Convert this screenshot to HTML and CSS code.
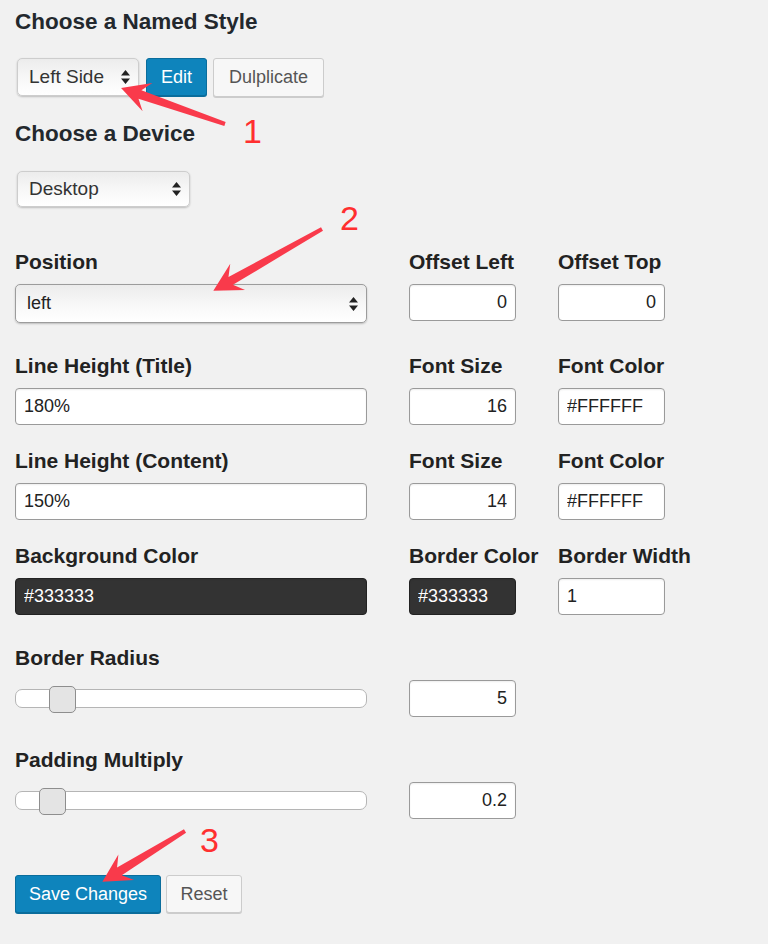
FILE: index.html
```html
<!DOCTYPE html>
<html lang="en">
<head>
    <meta charset="UTF-8">
    <meta name="viewport" content="width=device-width, initial-scale=1.0">
    <title>Style Settings</title>
    <link rel="stylesheet" href="styles.css">
</head>
<body>
    <div class="page">
        <h2>Choose a Named Style</h2>
        <div class="toolbar">
            <div class="select select-small style-select">
                <span>Left Side</span>
                <svg class="caret" width="9" height="14" viewBox="0 0 9 14"><path d="M4.5 0L9 5.5H0Z M0 8.5H9L4.5 14Z"/></svg>
            </div>
            <button class="button primary btn-edit">Edit</button>
            <button class="button btn-dup">Dulplicate</button>
        </div>

        <h2 class="device-title">Choose a Device</h2>
        <div class="select select-small device-select">
            <span>Desktop</span>
            <svg class="caret" width="9" height="14" viewBox="0 0 9 14"><path d="M4.5 0L9 5.5H0Z M0 8.5H9L4.5 14Z"/></svg>
        </div>

        <div class="row first">
            <div class="field">
                <label>Position</label>
                <div class="select select-wide">
                    <span>left</span>
                    <svg class="caret" width="9" height="14" viewBox="0 0 9 14"><path d="M4.5 0L9 5.5H0Z M0 8.5H9L4.5 14Z"/></svg>
                </div>
            </div>
            <div class="field">
                <label>Offset Left</label>
                <input class="input num" type="text" value="0">
            </div>
            <div class="field">
                <label>Offset Top</label>
                <input class="input num" type="text" value="0">
            </div>
        </div>

        <div class="row spaced">
            <div class="field">
                <label>Line Height (Title)</label>
                <input class="input" type="text" value="180%">
            </div>
            <div class="field">
                <label>Font Size</label>
                <input class="input num" type="text" value="16">
            </div>
            <div class="field">
                <label>Font Color</label>
                <input class="input" type="text" value="#FFFFFF">
            </div>
        </div>

        <div class="row">
            <div class="field">
                <label>Line Height (Content)</label>
                <input class="input" type="text" value="150%">
            </div>
            <div class="field">
                <label>Font Size</label>
                <input class="input num" type="text" value="14">
            </div>
            <div class="field">
                <label>Font Color</label>
                <input class="input" type="text" value="#FFFFFF">
            </div>
        </div>

        <div class="row">
            <div class="field">
                <label>Background Color</label>
                <input class="input dark" type="text" value="#333333">
            </div>
            <div class="field">
                <label>Border Color</label>
                <input class="input dark" type="text" value="#333333">
            </div>
            <div class="field">
                <label>Border Width</label>
                <input class="input" type="text" value="1">
            </div>
        </div>

        <div class="row spaced">
            <div class="field">
                <label>Border Radius</label>
                <div class="slider">
                    <div class="slider-track"></div>
                    <div class="slider-thumb" style="left: 34px"></div>
                </div>
            </div>
            <div class="field nolabel">
                <input class="input num" type="text" value="5">
            </div>
        </div>

        <div class="row spaced">
            <div class="field">
                <label>Padding Multiply</label>
                <div class="slider">
                    <div class="slider-track"></div>
                    <div class="slider-thumb" style="left: 24px"></div>
                </div>
            </div>
            <div class="field nolabel">
                <input class="input num" type="text" value="0.2">
            </div>
        </div>

        <div class="actions">
            <button class="button primary btn-save">Save Changes</button>
            <button class="button btn-reset">Reset</button>
        </div>

        <!-- annotation arrows drawn over the form -->
        <svg class="marks" width="768" height="944" viewBox="0 0 768 944">
            <g fill="#f93a4b">
                <polygon transform="translate(225 124) rotate(199.1)" points="0,-2 90,-4.5 82,-15 110,0 82,15 90,4.5 0,2"/>
                <polygon transform="translate(322 229) rotate(150.4)" points="0,-2 105,-4.5 97,-15 125,0 97,15 105,4.5 0,2"/>
                <polygon transform="translate(185 831) rotate(148.4)" points="0,-2 77,-4.5 69,-15 97,0 69,15 77,4.5 0,2"/>
            </g>
            <g class="mark-num">
                <text x="243" y="143">1</text>
                <text x="340" y="230">2</text>
                <text x="200" y="852">3</text>
            </g>
        </svg>
    </div>
</body>
</html>
```

FILE: styles.css
```css
body {
    margin: 0;
    background-color: #f1f1f1;
    font-family: "Liberation Sans", Arial, sans-serif;
    color: #23282d;
}
.page {
    position: relative;
    min-height: 944px;
    box-sizing: border-box;
    padding: 9px 0 0 15px;
}
h2 {
    margin: 0;
    font-size: 22.5px;
    line-height: 26px;
    font-weight: bold;
}
.toolbar {
    display: flex;
    gap: 6px;
    margin-top: 23px;
}
.device-title {
    margin-top: 24px;
}
.select {
    display: flex;
    align-items: center;
    justify-content: space-between;
    box-sizing: border-box;
    padding: 0 8px 0 11px;
    border: 1px solid #cdcdcd;
    border-radius: 5px;
    background: linear-gradient(#ececec, #f8f8f8 55%, #fff);
    box-shadow: 0 1px 2px rgba(0, 0, 0, 0.22);
    color: #333;
    font-size: 19px;
}
.caret {
    fill: #222;
}
.select-small {
    height: 38px;
    margin-left: 2px;
}
.style-select {
    width: 122px;
    margin-right: 1px;
}
.device-select {
    width: 173px;
    height: 36px;
    margin-top: 24px;
}
.select-wide {
    width: 100%;
    height: 39px;
    border-color: #9c9c9c;
    font-size: 18px;
    color: #222;
}
.button {
    box-sizing: border-box;
    height: 38px;
    padding: 0;
    border: 1px solid #cccccc;
    border-radius: 3px;
    background-color: #f7f7f7;
    box-shadow: 0 1px 0 #cccccc;
    color: #555;
    font-family: "Liberation Sans", Arial, sans-serif;
    font-size: 18px;
}
.primary {
    background-color: #0e84bc;
    border-color: #0a6d9c;
    box-shadow: 0 1px 0 #0a6d9c;
    color: #fff;
}
.btn-edit {
    width: 61px;
}
.btn-dup {
    width: 111px;
    height: 39px;
}
.btn-save {
    width: 146px;
}
.btn-reset {
    width: 76px;
}
.row {
    display: grid;
    grid-template-columns: 352px 107px 107px;
    column-gap: 42px;
    align-items: start;
    margin-top: 24px;
}
.row.first {
    margin-top: 43px;
}
.row.spaced {
    margin-top: 31px;
}
.field label {
    display: block;
    margin-bottom: 10px;
    font-size: 21px;
    line-height: 24px;
    font-weight: bold;
    white-space: nowrap;
    color: #222;
}
.field.nolabel {
    padding-top: 34px;
}
.input {
    display: block;
    box-sizing: border-box;
    width: 100%;
    height: 37px;
    margin: 0;
    padding: 0 8px;
    border: 1px solid #9a9a9a;
    border-radius: 4px;
    background-color: #fff;
    box-shadow: inset 0 1px 2px rgba(0, 0, 0, 0.07);
    font-family: "Liberation Sans", Arial, sans-serif;
    font-size: 18px;
    color: #222;
}
.num {
    text-align: right;
}
.dark {
    background-color: #333333;
    border-color: #222;
    color: #fff;
}
.slider {
    position: relative;
    display: flex;
    align-items: center;
    height: 37px;
}
.slider-track {
    box-sizing: border-box;
    width: 100%;
    height: 19px;
    border: 1px solid #b5b5b5;
    border-radius: 7px;
    background-color: #fff;
}
.slider-thumb {
    position: absolute;
    top: 6px;
    box-sizing: border-box;
    width: 27px;
    height: 27px;
    border: 1px solid #8e8e8e;
    border-radius: 5px;
    background-color: #e4e4e4;
}
.actions {
    display: flex;
    gap: 5px;
    margin-top: 56px;
}
.marks {
    position: absolute;
    top: 0;
    left: 0;
    pointer-events: none;
}
.mark-num {
    fill: #ff2f2f;
    font-family: "Liberation Sans", Arial, sans-serif;
    font-size: 34px;
}
```
